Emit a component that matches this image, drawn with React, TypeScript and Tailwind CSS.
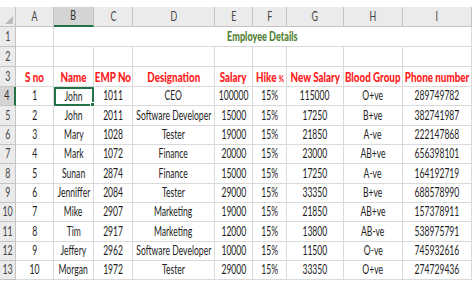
import React from "react";

const rows: string[][] = [
  ["1", "John", "1011", "CEO", "100000", "15%", "115000", "O+ve", "289749782"],
  ["2", "John", "2011", "Software Developer", "15000", "15%", "17250", "B+ve", "382741987"],
  ["3", "Mary", "1028", "Tester", "19000", "15%", "21850", "A-ve", "222147868"],
  ["4", "Mark", "1072", "Finance", "20000", "15%", "23000", "AB+ve", "656398101"],
  ["5", "Sunan", "2874", "Finance", "15000", "15%", "17250", "A-ve", "164192719"],
  ["6", "Jenniffer", "2084", "Tester", "29000", "15%", "33350", "B+ve", "688578990"],
  ["7", "Mike", "2907", "Marketing", "19000", "15%", "21850", "AB+ve", "157378911"],
  ["8", "Tim", "2917", "Marketing", "12000", "15%", "13800", "AB-ve", "538975791"],
  ["9", "Jeffery", "2962", "Software Developer", "10000", "15%", "11500", "O-ve", "745932616"],
  ["10", "Morgan", "1972", "Tester", "29000", "15%", "33350", "O+ve", "274729436"],
];

const letters = ["A", "B", "C", "D", "E", "F", "G", "H", "I"];
const heads = ["S no", "Name", "EMP No", "Designation", "Salary", "HIKE", "New Salary", "Blood Group", "Phone number"];

function T({ children, cls }: { children: React.ReactNode; cls: string }) {
  return <span className={`inline-block whitespace-nowrap ${cls}`}>{children}</span>;
}

export default function App() {
  return (
    <div className="w-[474px] h-[286px] bg-white overflow-hidden pt-[7px]" style={{ fontFamily: "Lato, 'Liberation Sans', sans-serif" }}>
      <div className="grid grid-cols-[16px_38px_40px_39px_82px_38px_34px_57px_59px_69px] grid-rows-[20px_repeat(3,20px)_repeat(10,19.33px)]">
        {/* corner */}
        <div className="relative bg-[#ebebeb] border-r border-b border-[#c4c4c4]">
          <svg className="absolute right-[2px] bottom-[2px]" width="8" height="8" viewBox="0 0 8 8">
            <polygon points="8,0 8,8 0,8" fill="#bdbdbd" />
          </svg>
        </div>
        {letters.map((l) =>
          l === "B" ? (
            <div key={l} className="flex items-center justify-center bg-[#d4d4d4] border-r border-[#c4c4c4] border-b-2 border-b-[#217346] text-[#2a2a2a] text-[13px]">
              <T cls="scale-x-[0.68]">{l}</T>
            </div>
          ) : (
            <div key={l} className="flex items-center justify-center bg-[#ebebeb] border-r border-b border-[#c4c4c4] text-[#444] text-[13px]">
              <T cls="scale-x-[0.68]">{l}</T>
            </div>
          )
        )}

        {/* row 1 */}
        <div className="flex items-center justify-center bg-[#ebebeb] border-r border-b border-[#c4c4c4] text-[#444] text-[13px]">
          <T cls="scale-x-[0.68]">1</T>
        </div>
        <div className="border-r border-b border-[#dadada]" />
        <div className="col-span-8 flex items-center justify-center border-r border-b border-[#dadada] text-[13px] font-black text-[#538135]">
          <T cls="scale-x-[0.7]">Employee Details</T>
        </div>

        {/* row 2 */}
        <div className="flex items-center justify-center bg-[#ebebeb] border-r border-b border-[#c4c4c4] text-[#444] text-[13px]">
          <T cls="scale-x-[0.68]">2</T>
        </div>
        {letters.map((l) => (
          <div key={"r2" + l} className="border-r border-b border-[#dadada]" />
        ))}

        {/* row 3 headers */}
        <div className="flex items-center justify-center bg-[#ebebeb] border-r border-b border-[#c4c4c4] text-[#444] text-[13px]">
          <T cls="scale-x-[0.68]">3</T>
        </div>
        {heads.map((h) => (
          <div key={h} className="flex items-center justify-center border-r border-b border-[#dadada] text-[14px] font-black text-[#ff1a1a]">
            {h === "HIKE" ? (
              <T cls="scale-x-[0.7]">
                Hike <span className="text-[9px]">%</span>
              </T>
            ) : (
              <T cls="scale-x-[0.7]">{h}</T>
            )}
          </div>
        ))}

        {/* data rows */}
        {rows.map((r, i) => {
          const num = String(i + 4);
          const sel = i === 0;
          return (
            <React.Fragment key={num}>
              {sel ? (
                <div className="flex items-center justify-center bg-[#d4d4d4] border-r-2 border-r-[#217346] border-b border-[#c4c4c4] text-[#2a2a2a] text-[13px]">
                  <T cls="scale-x-[0.68]">{num}</T>
                </div>
              ) : (
                <div className="flex items-center justify-center bg-[#ebebeb] border-r border-b border-[#c4c4c4] text-[#444] text-[13px]">
                  <T cls="scale-x-[0.68]">{num}</T>
                </div>
              )}
              {r.map((c, j) =>
                sel && j === 1 ? (
                  <div key={j} className="relative flex items-center justify-center border-2 border-[#217346] text-[13px] text-[#1e1e1e]">
                    <T cls="scale-x-[0.66]">{c}</T>
                    <div className="absolute right-[-3px] bottom-[-3px] w-[5px] h-[5px] bg-[#217346] border border-white" />
                  </div>
                ) : (
                  <div key={j} className="flex items-center justify-center border-r border-b border-[#dadada] text-[13px] text-[#1e1e1e]">
                    <T cls="scale-x-[0.66]">{c}</T>
                  </div>
                )
              )}
            </React.Fragment>
          );
        })}
      </div>
    </div>
  );
}
